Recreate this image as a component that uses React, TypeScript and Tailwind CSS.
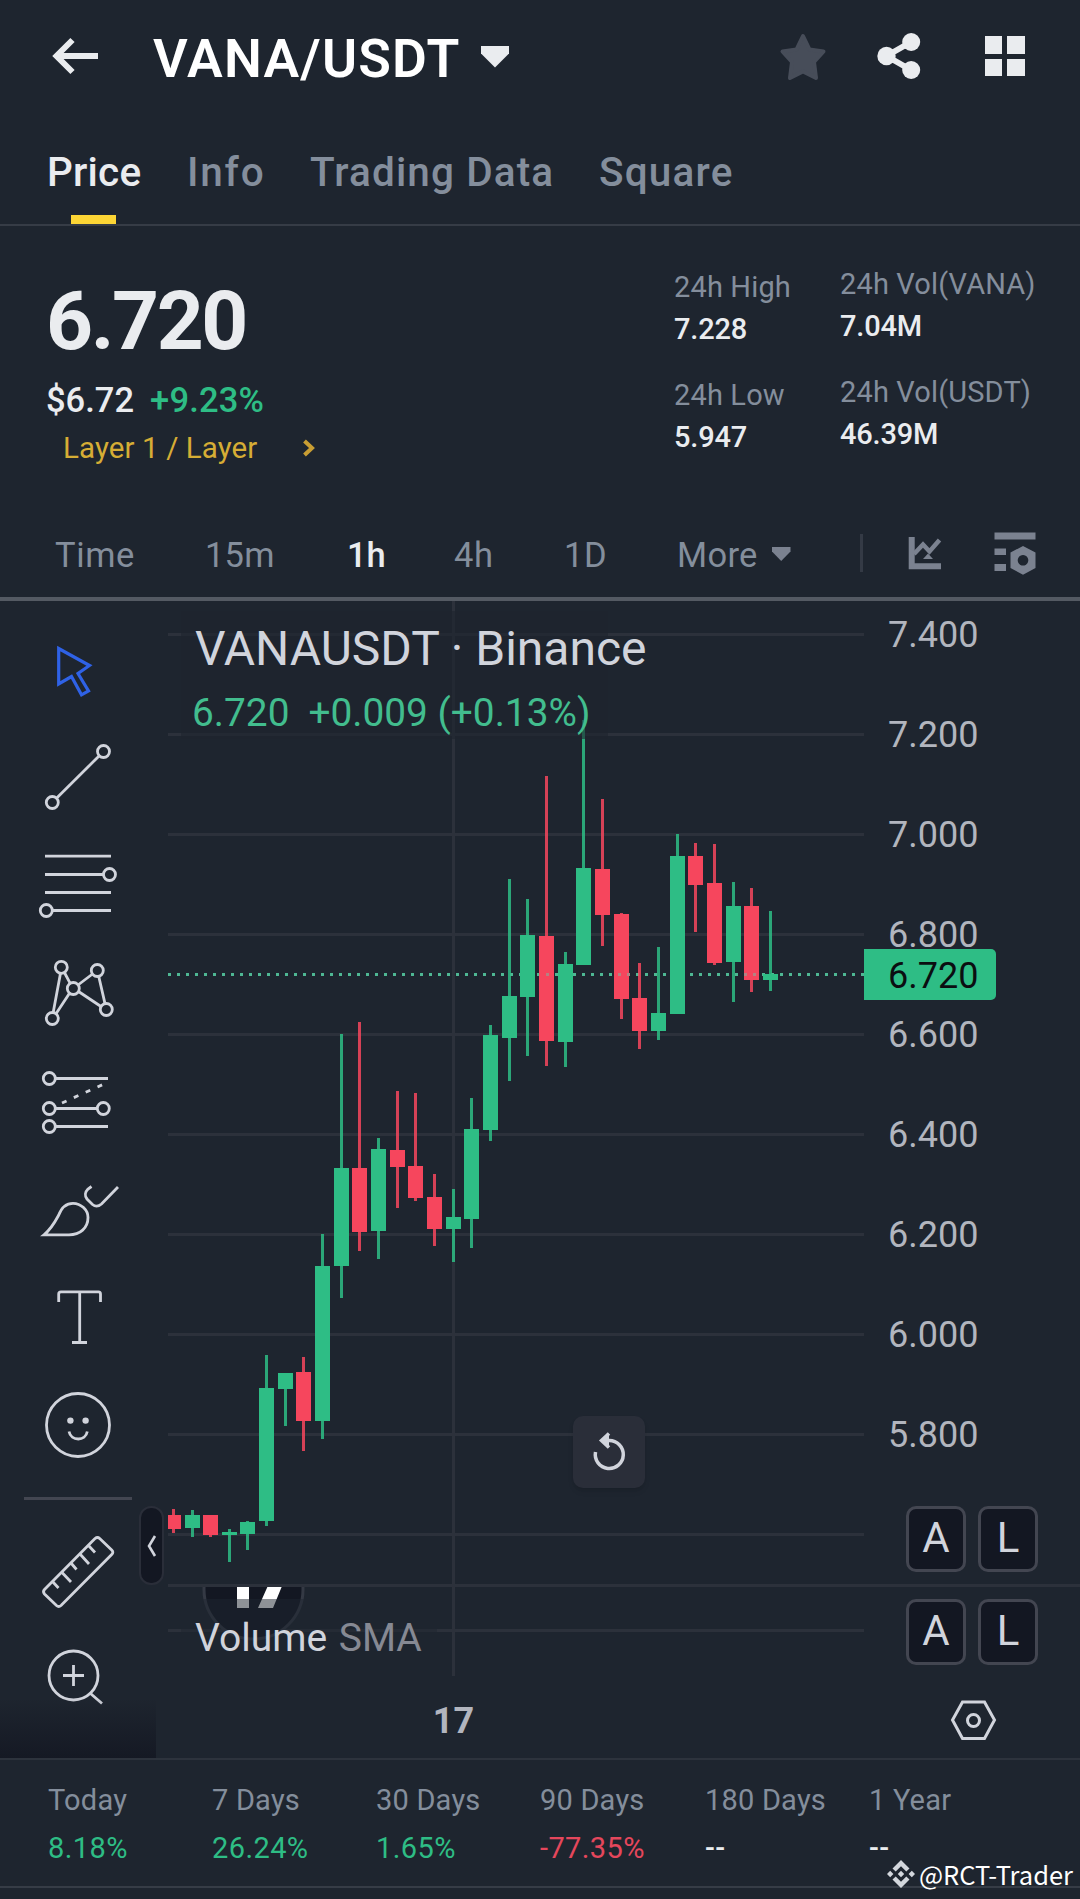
import type { ReactNode } from "react";

type Candle = {
  x: number;
  high: number;
  top: number;
  bottom: number;
  low: number;
  up: boolean;
};

const UP = "#2ebd85";
const DOWN = "#f6465d";

const c = (
  x: number,
  high: number,
  top: number,
  bottom: number,
  low: number,
  up: boolean
): Candle => ({ x, high, top, bottom, low, up });

const candles: Candle[] = [
  c(173.5, 1509, 1515, 1529, 1533, false),
  c(192.5, 1510, 1515, 1528, 1537, true),
  c(210.5, 1515, 1515, 1535, 1537, false),
  c(229.5, 1529, 1532, 1535, 1562, true),
  c(247.5, 1521, 1522, 1534, 1550, true),
  c(266.5, 1355, 1388, 1521, 1526, true),
  c(285.5, 1373, 1373, 1389, 1426, true),
  c(303.5, 1357, 1372, 1421, 1451, false),
  c(322.5, 1234, 1266, 1421, 1439, true),
  c(341.5, 1034, 1168, 1266, 1298, true),
  c(359.5, 1022, 1168, 1232, 1251, false),
  c(378.5, 1138, 1149, 1231, 1259, true),
  c(397.5, 1091, 1150, 1167, 1208, false),
  c(415.5, 1093, 1166, 1198, 1201, false),
  c(434.5, 1174, 1197, 1229, 1246, false),
  c(453.5, 1189, 1217, 1229, 1262, true),
  c(471.5, 1098, 1129, 1219, 1248, true),
  c(490.5, 1025, 1035, 1130, 1141, true),
  c(509.5, 879, 996, 1038, 1081, true),
  c(527.5, 899, 935, 997, 1056, true),
  c(546.5, 776, 936, 1041, 1066, false),
  c(565.5, 952, 964, 1042, 1067, true),
  c(583.5, 720, 868, 965, 965, true),
  c(602.5, 799, 869, 915, 946, false),
  c(621.5, 913, 914, 999, 1019, false),
  c(639.5, 963, 998, 1031, 1049, false),
  c(658.5, 947, 1013, 1031, 1040, true),
  c(677.5, 834, 856, 1014, 1014, true),
  c(695.5, 843, 856, 885, 932, false),
  c(714.5, 844, 883, 963, 965, false),
  c(733.5, 882, 906, 962, 1002, true),
  c(751.5, 888, 906, 980, 992, false),
  c(770.5, 911, 974, 980, 991, true),
];

const gridLines = [634.5, 734.5, 834.5, 934.5, 1034.5, 1134.5, 1234.5, 1334.5, 1434.5, 1534.5];

const priceLabels = ["7.400", "7.200", "7.000", "6.800", "6.600", "6.400", "6.200", "6.000", "5.800"];

const periods = [
  { label: "Today", value: "8.18%", color: "text-[#2ebd85]" },
  { label: "7 Days", value: "26.24%", color: "text-[#2ebd85]" },
  { label: "30 Days", value: "1.65%", color: "text-[#2ebd85]" },
  { label: "90 Days", value: "-77.35%", color: "text-[#e5475c]" },
  { label: "180 Days", value: "--", color: "font-medium text-[#eaecef]" },
  { label: "1 Year", value: "--", color: "font-medium text-[#eaecef]" },
];

const Header = () => (
  <header className="flex h-[112px] items-center">
    <svg className="ml-[50px] h-[40px] w-[50px]" viewBox="50 36 50 40" fill="none" stroke="#eaecef" strokeWidth="6">
      <path d="M98 56H57M72.500 40L56.500 56L72.500 72" />
    </svg>
    <h1 className="ml-[53px] w-[328px] whitespace-nowrap pt-[5px] text-[53.5px] leading-[60px] font-semibold tracking-[1.2px] text-white">
      VANA/USDT
    </h1>
    <svg className="h-[24px] w-[28px]" viewBox="481 44 28 24" fill="#eaecef">
      <path d="M481 46h28v7.500L495 67.500L481 53.500z" />
    </svg>
    <svg
      className="ml-[269px] h-[52px] w-[50px]"
      viewBox="778 30 50 52"
      fill="#474d59"
      stroke="#474d59"
      strokeWidth="4"
      strokeLinejoin="round"
    >
      <path d="M803 36L809.500 49.500L823.500 51.500L814 62L816 78L803 71.500L790 78L792 62L782.500 51.500L796.500 49.500z" />
    </svg>
    <svg className="ml-[47px] h-[50px] w-[48px]" viewBox="875 31 48 50" fill="#eaecef">
      <path d="M886.500 56L911 42M886.500 56L911 70" stroke="#eaecef" strokeWidth="6" />
      <circle cx="886.500" cy="56" r="9.200" />
      <circle cx="911.200" cy="42" r="9" />
      <circle cx="911.200" cy="70" r="9" />
    </svg>
    <div className="ml-[61.500px] grid h-[40px] w-[40px] grid-cols-2 gap-x-[4.500px] gap-y-[5px]">
      <span className="bg-[#eaecef]" />
      <span className="bg-[#eaecef]" />
      <span className="bg-[#eaecef]" />
      <span className="bg-[#eaecef]" />
    </div>
  </header>
);

const Tabs = () => (
  <nav className="flex h-[114px] border-b-2 border-[#363c46] pl-[47px] pt-[30px] text-[40.5px] leading-[60px] font-medium text-[#848e9c]">
    <div className="relative w-[140px] tracking-[0.2px] text-[#eaecef]">
      Price
      <span className="absolute bottom-0 left-[24px] h-[9px] w-[45px] bg-[#fcd535]" />
    </div>
    <div className="w-[123px] tracking-[1.8px]">Info</div>
    <div className="w-[289px] whitespace-nowrap tracking-[1.1px]">Trading Data</div>
    <div className="tracking-[1.2px]">Square</div>
  </nav>
);

const Stat = ({ label, value }: { label: string; value: string }) => (
  <div className="h-[108px] whitespace-nowrap text-[29px]">
    <div className="leading-[42px] tracking-[0.15px] text-[#848e9c]">{label}</div>
    <div className="leading-[42px] font-medium tracking-[-0.2px] text-[#eaecef]">{value}</div>
  </div>
);

const Ticker = () => (
  <section className="flex h-[276px]">
    <div className="w-[674px] pl-[46px] pt-[45px]">
      <div className="h-[100px] text-[82px] leading-[100px] font-bold tracking-[-2.400px] text-[#eaecef]">6.720</div>
      <div className="flex h-[58px] gap-[16px] text-[34.500px] leading-[58px] font-medium text-[#eaecef]">
        <span>$6.72</span>
        <span className="tracking-[0.2px] text-[#2ebd85]">+9.23%</span>
      </div>
      <div className="flex h-[38px] items-center pl-[17px] text-[29.500px] leading-[38px] tracking-[0.1px] text-[#d6ad35]">
        <span className="w-[239px]">Layer 1 / Layer</span>
        <svg className="h-[18px] w-[14px]" viewBox="0 0 14 18" fill="none" stroke="#c99e33" strokeWidth="4">
          <path d="M2.500 2L10 9L2.500 16" />
        </svg>
      </div>
    </div>
    <div className="w-[166px] pt-[40px]">
      <Stat label="24h High" value="7.228" />
      <Stat label="24h Low" value="5.947" />
    </div>
    <div className="pt-[37px]">
      <Stat label="24h Vol(VANA)" value="7.04M" />
      <Stat label="24h Vol(USDT)" value="46.39M" />
    </div>
  </section>
);

const Intervals = () => (
  <div className="flex h-[99px] border-b-4 border-[#545a63] pl-[55px] pt-[23px] text-[34.500px] leading-[60px] text-[#848e9c]">
    <div className="w-[150px] tracking-[0.6px]">Time</div>
    <div className="w-[142px] tracking-[0.2px]">15m</div>
    <div className="w-[107px] font-medium text-[#eaecef]">1h</div>
    <div className="w-[110px] tracking-[0.5px]">4h</div>
    <div className="w-[113px] tracking-[0.5px]">1D</div>
    <div className="flex w-[183px] gap-[14px] tracking-[0.300px]">
      More
      <svg className="mt-[21px] h-[16px] w-[19px]" viewBox="0 0 19 16" fill="#7b8290">
        <path d="M0 1h18.500v4.500L9.200 15L0 5.500z" />
      </svg>
    </div>
    <div className="mt-[9px] h-[38px] w-[3px] bg-[#343a45]" />
    <svg className="ml-[45px] mt-[10px] h-[36px] w-[36px]" viewBox="908 534 36 36" fill="none" stroke="#7b8290">
      <path d="M911.700 536V565.300H941" strokeWidth="6" />
      <path d="M914 553L923 543.500L929.500 550.500L939.500 539" strokeWidth="4.500" />
      <path d="M923 558L928 552.500L933 558z" fill="#7b8290" stroke="none" />
    </svg>
    <svg className="ml-[48px] mt-[7px] h-[46px] w-[46px]" viewBox="992 532 46 46" fill="#7b8290">
      <path d="M994.500 532.500h41v7h-41zM994.500 548.500h11.500v6.500h-11.500zM994.500 564h11.500v7h-11.500z" />
      <path
        fillRule="evenodd"
        d="M1023 546L1035.500 552.500V568L1023 574.800L1010.500 568V552.500zM1023 555a5.300 5.300 0 1 0 0.010 0z"
      />
    </svg>
  </div>
);

// Every drawing tool sits in a 108px high slot of the side bar
const Tool = ({ y, children }: { y: number; children: ReactNode }) => (
  <svg
    className="h-[108px] w-[156px] shrink-0"
    viewBox={`0 ${y} 156 108`}
    fill="none"
    stroke="#d1d4dc"
    strokeWidth="2.800"
  >
    {children}
  </svg>
);

const Toolbar = () => (
  <aside className="relative flex w-[168px] flex-col pt-[16px]">
    <Tool y={617}>
      <path
        d="M58.700 648.500V684L71.500 676.500L81.500 694.800L88.500 691L78 673.500L89.500 665.500z"
        stroke="#2f62e6"
        strokeWidth="3.200"
      />
    </Tool>
    <Tool y={725}>
      <circle cx="103.500" cy="751.500" r="6" />
      <circle cx="52.300" cy="802.500" r="6" />
      <path d="M56.500 798.300L99.300 755.700" />
    </Tool>
    <Tool y={833}>
      <path d="M45 856.200H111M45 874.500H103.500M45 892.500H111M52.500 910.500H111" />
      <circle cx="109.500" cy="874.500" r="6" />
      <circle cx="46.300" cy="910.500" r="6" />
    </Tool>
    <Tool y={941}>
      <circle cx="61.300" cy="967.300" r="6" />
      <circle cx="97.300" cy="970.500" r="6" />
      <circle cx="73.300" cy="988.500" r="6" />
      <circle cx="52.300" cy="1018.500" r="6" />
      <circle cx="106.300" cy="1009.500" r="6" />
      <path d="M60.500 973.300L53.200 1012.500M64.400 972.500L70.200 983.300M69.500 993.200L56 1013.700M78 985L92.500 974M98.700 976.300L105 1003.600M78.500 991.500L101 1006.500" />
    </Tool>
    <Tool y={1049}>
      <circle cx="49.300" cy="1078.500" r="6" />
      <circle cx="49.300" cy="1108.500" r="6" />
      <circle cx="103.300" cy="1108.500" r="6" />
      <circle cx="49.300" cy="1126.500" r="6" />
      <path d="M55.500 1078.500H108M55.500 1108.500H97M55.500 1126.500H108" />
      <path d="M62 1103L104 1084" strokeDasharray="5 8" />
    </Tool>
    <Tool y={1157}>
      <path d="M44 1234.800C50 1230 55 1222 58.500 1215.500C62 1206 67 1203.300 73 1203.300C81 1203.300 88 1210 88 1217.500C88 1228 80 1234.800 69 1234.800z" />
      <path d="M91.500 1186.500L88 1189C85 1192 84.500 1196 87 1199L92.500 1204.500C95.500 1207 98.500 1206.500 101.500 1204L118 1187" />
    </Tool>
    <Tool y={1265}>
      <path d="M58.700 1302V1294Q58.700 1291.800 61 1291.800H98.500Q100.500 1291.800 100.500 1294V1302M79.700 1292V1342.500M72 1342.500H87" />
    </Tool>
    <Tool y={1373}>
      <circle cx="78" cy="1425" r="31.500" />
      <circle cx="70.400" cy="1420.600" r="3.200" fill="#d1d4dc" stroke="none" />
      <circle cx="85.600" cy="1420.600" r="3.200" fill="#d1d4dc" stroke="none" />
      <path d="M69 1431.500C71 1441.500 85.500 1441.500 87.300 1431.500" />
    </Tool>
    <div className="ml-[24px] mt-[16px] mb-[16px] h-[3px] w-[108px] shrink-0 bg-[#434651]" />
    <Tool y={1516}>
      <path
        d="M44.500 1589.500L95 1538.500Q97.500 1536.500 99.700 1538.500L111.700 1550Q114 1552.300 111.700 1554.500L61 1605.500Q58.700 1607.500 56.500 1605.500L44.500 1594Q42.500 1591.800 44.500 1589.500z"
      />
      <path d="M52.500 1581.500L58.500 1588M62 1572.500L71 1582M71 1563L76.500 1569.500M80 1554L89 1564M88.500 1545.500L95 1552.500" />
    </Tool>
    <Tool y={1624}>
      <circle cx="73.500" cy="1675.500" r="24.500" />
      <path d="M63 1675.500H84M73.500 1665V1686M90.500 1693.500L102 1703.500" />
    </Tool>
    <div className="absolute bottom-0 left-0 h-[60px] w-[156px] bg-gradient-to-b from-[#151924]/0 to-[#151924]" />
    <div className="absolute right-[4px] top-[905px] flex h-[79px] w-[25px] items-center justify-center rounded-[12px] border-2 border-[#2a2e39] bg-[#131722]">
      <svg className="h-[24px] w-[12px]" viewBox="0 0 12 24" fill="none" stroke="#d1d4dc" strokeWidth="2.600">
        <path d="M9 2L3 12L9 22" />
      </svg>
    </div>
  </aside>
);

const Plot = () => (
  <svg className="block h-[1157px] w-[696px]" viewBox="168 601 696 1157">
    <g stroke="#2c313b" strokeWidth="3">
      {gridLines.map((y) => (
        <line key={y} x1="168" x2="864" y1={y} y2={y} />
      ))}
      <line x1="168" x2="864" y1="1585.500" y2="1585.500" />
      <line x1="168" x2="864" y1="1630.500" y2="1630.500" />
      <line x1="453.500" x2="453.500" y1="601" y2="1676" />
    </g>
    <line x1="168" x2="864" y1="974.500" y2="974.500" stroke="#4fb894" strokeWidth="3" strokeDasharray="3 6" />
    {candles.map((k) => (
      <g key={k.x} fill={k.up ? UP : DOWN}>
        <rect x={k.x - 1.5} y={k.high} width="3" height={k.low - k.high} opacity="0.85" />
        <rect x={k.x - 7.5} y={k.top} width="15" height={k.bottom - k.top} />
      </g>
    ))}
    {/* last price dots show through the falling candles */}
    <path d="M546 974.500h3M618 974.500h3M627 974.500h3M744 974.500h3M753 974.500h3" stroke="#b58282" strokeWidth="3" />
    {/* logo cut off by the pane border */}
    <clipPath id="pane">
      <rect x="190" y="1587" width="130" height="60" />
    </clipPath>
    <g clipPath="url(#pane)">
      <circle cx="253.500" cy="1589.500" r="49.500" fill="#131722" stroke="#343944" strokeWidth="3" />
      <path d="M237 1580h12v28h-12zM270.500 1580h14l-11.500 28h-15z" fill="#fff" />
    </g>
  </svg>
);

const ScaleButtons = () => (
  <div className="ml-[42px] flex shrink-0 gap-[12px] text-[42px] leading-[56px] text-[#d1d4dc]">
    <button className="h-[66px] w-[60px] rounded-[10px] border-3 border-[#434651] bg-[#131722] pb-[3px]">A</button>
    <button className="h-[66px] w-[60px] rounded-[10px] border-3 border-[#434651] bg-[#131722] pb-[3px]">L</button>
  </div>
);

const PriceAxis = () => (
  <div className="relative flex w-[216px] flex-col">
    <div className="flex h-[983px] flex-col gap-[34px] pl-[24px] text-[36px] leading-[68px] text-[#b2b5be]">
      {priceLabels.map((p) => (
        <div key={p} className="h-[66px] shrink-0">
          {p}
        </div>
      ))}
      <div className="-ml-[24px] mt-[5px]">
        <ScaleButtons />
      </div>
    </div>
    <div className="h-[3px] bg-[#2c313b]" />
    <div className="pt-[12px]">
      <ScaleButtons />
    </div>
    <svg
      className="ml-[86px] mt-[34px] h-[42px] w-[48px]"
      viewBox="0 0 48 42"
      fill="none"
      stroke="#d1d4dc"
      strokeWidth="3"
    >
      <path d="M12.500 3H34.500L44.500 21L34.500 39.500H12.500L2.500 21z" />
      <circle cx="23.500" cy="21.500" r="6" />
    </svg>
    <div className="absolute left-0 top-[348px] h-[51px] w-[132px] rounded-r-[5px] bg-[#2ebd85] pl-[24px] text-[36px] leading-[55px] text-[#0b0e11]">
      6.720
    </div>
  </div>
);

const Chart = () => (
  <section className="flex h-[1157px]">
    <Toolbar />
    <div className="relative flex">
      <Plot />
      <PriceAxis />
      <div className="absolute left-[13px] top-[10px] h-[128px] w-[427px] whitespace-nowrap bg-[#1e252f]/60 pl-[14px] text-[#d1d4dc]">
        <div className="h-[68px] text-[48px] leading-[76px]">VANAUSDT · Binance</div>
        <div className="-ml-[3px] flex h-[56px] gap-[19px] text-[38.800px] leading-[68px] text-[#42bd8e]">
          <span>6.720</span>
          <span>+0.009 (+0.13%)</span>
        </div>
      </div>
      <div className="absolute left-[13px] top-[998px] h-[64px] w-[256px] bg-[#1e252f]/50 pl-[14px] text-[39px] leading-[78px] whitespace-nowrap text-[#d1d4dc]">
        Volume <span className="ml-[2px] text-[#868993]">SMA</span>
      </div>
      <div className="absolute left-[235px] top-[1094px] w-[101px] text-center text-[36px] leading-[52px] font-bold text-[#b2b5be]">
        17
      </div>
      <button className="absolute left-[405px] top-[815px] flex h-[72px] w-[72px] items-center justify-center rounded-[10px] bg-[#2a2e39] shadow-md">
        <svg className="h-[42px] w-[42px]" viewBox="0 0 42 42" fill="none" stroke="#d1d4dc" strokeWidth="3.500">
          <path d="M7.500 21A14 14 0 1 0 21 9.500H14" />
          <path d="M21 2.500L13.500 9.500L21 16.500" fill="#d1d4dc" />
        </svg>
      </button>
    </div>
  </section>
);

const Performance = () => (
  <section className="grid h-[130px] grid-cols-[164px_164px_164px_165px_164px_1fr] border-b-2 border-t-2 border-b-[#363c46] border-t-[#2d333d] pl-[48px] pt-[19px] text-[29px]">
    {periods.map((p) => (
      <div key={p.label} className="whitespace-nowrap">
        <div className="leading-[42px] tracking-[0.200px] text-[#848e9c]">{p.label}</div>
        <div className={`mt-[6px] leading-[42px] tracking-[0.400px] ${p.color}`}>{p.value}</div>
      </div>
    ))}
  </section>
);

const Watermark = () => (
  <div className="absolute bottom-[7px] right-[7px] flex h-[36px] items-center gap-[4px] font-['Noto_Sans_CJK_SC',sans-serif] text-[25.500px] leading-[36px] text-white">
    <svg className="h-[28px] w-[28px]" viewBox="0 0 28 28" fill="#d3d7dd">
      <path d="M14 0L22.500 8.500L19.300 11.600L14 6.300L8.700 11.600L5.500 8.500z" />
      <path d="M14 28L22.500 19.500L19.300 16.400L14 21.700L8.700 16.400L5.500 19.500z" />
      <path d="M3.200 10.800L6.400 14L3.200 17.200L0 14zM24.800 10.800L28 14L24.800 17.200L21.600 14zM14 10.800L17.200 14L14 17.200L10.800 14z" />
    </svg>
    @RCT-Trader
  </div>
);

const App = () => {
  return (
    <div className="relative h-[1899px] w-[1080px] overflow-hidden bg-[#1e252f] font-[Roboto,sans-serif]">
      <Header />
      <Tabs />
      <Ticker />
      <Intervals />
      <Chart />
      <Performance />
      <Watermark />
    </div>
  );
};

export default App;
